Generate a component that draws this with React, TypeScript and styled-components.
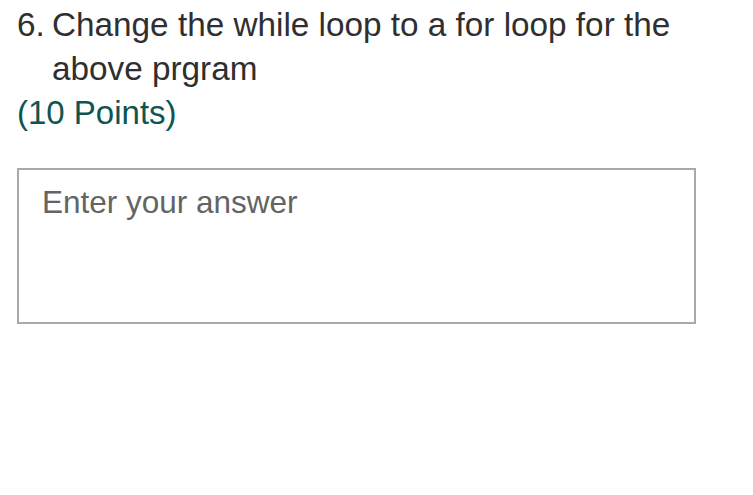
import React from "react";
import styled, { createGlobalStyle } from "styled-components";

const Global = createGlobalStyle`
  html, body { margin: 0; padding: 0; background: #ffffff; }
  body { font-family: "Liberation Sans", Arial, sans-serif; }
`;

const Page = styled.div`
  padding: 3px 57px 0 17px;
  display: flex;
  flex-direction: column;
`;

const Question = styled.div`
  display: flex;
  font-size: 33.3px;
  line-height: 44px;
  color: #2f2f2f;
`;

const Number = styled.span`
  flex: 0 0 35px;
`;

const Title = styled.span`
  flex: 1;
`;

const Points = styled.div`
  font-size: 33px;
  line-height: 44px;
  color: #0d5550;
`;

const Answer = styled.textarea`
  margin-top: 33px;
  box-sizing: border-box;
  width: 679px;
  height: 156px;
  border: 2px solid #a9a9a9;
  padding: 14px 23px;
  font-family: "Liberation Sans", Arial, sans-serif;
  font-size: 31.5px;
  line-height: 37px;
  color: #333;
  resize: none;
  outline: none;
  background: #fff;
  &::placeholder {
    color: #646464;
    opacity: 1;
  }
`;

export default function App() {
  return (
    <>
      <Global />
      <Page>
        <Question>
          <Number>6.</Number>
          <Title>Change the while loop to a for loop for the above prgram</Title>
        </Question>
        <Points>(10 Points)</Points>
        <Answer placeholder="Enter your answer" />
      </Page>
    </>
  );
}
